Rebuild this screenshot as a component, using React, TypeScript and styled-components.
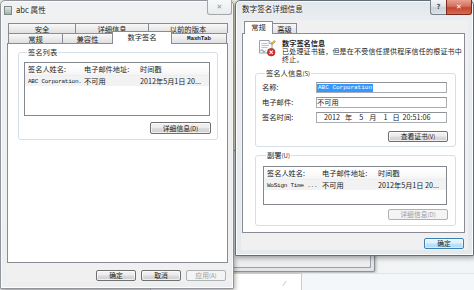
import React from 'react';
import styled, { createGlobalStyle, css } from 'styled-components';

const CJK = `"Noto Sans CJK SC", "Noto Sans", sans-serif`;
const MONO = `"Liberation Mono", "DejaVu Sans Mono", monospace`;

const GlobalStyle = createGlobalStyle`
  html, body { margin: 0; padding: 0; }
  body { width: 474px; height: 290px; overflow: hidden; font-family: ${CJK}; font-size: 7.2px; color: #1c1c1c; }
  * { box-sizing: border-box; }
`;

const Desktop = styled.div`
  position: relative;
  width: 474px;
  height: 290px;
  overflow: hidden;
  background: linear-gradient(90deg, #e9e9e6 0%, #efeee8 46%, #f4efd6 49%, #f1f1ee 52%, #f2f5f8 100%);
`;

const Win = styled.div<{ $x: number; $y: number; $w: number; $h: number; $active?: boolean }>`
  position: absolute;
  left: ${p => p.$x}px;
  top: ${p => p.$y}px;
  width: ${p => p.$w}px;
  height: ${p => p.$h}px;
  display: flex;
  flex-direction: column;
  border: 1px solid ${p => (p.$active ? '#646c74' : '#8f959b')};
  border-radius: 5px 5px 1px 1px;
  background: ${p =>
    p.$active
      ? 'linear-gradient(180deg, #e1e7ed 0px, #eaeef2 20px, #e4e9ee 100%)'
      : 'linear-gradient(180deg, #eff1f2 0px, #eceeef 100%)'};
  box-shadow: inset 0 0 0 1px rgba(255, 255, 255, 0.8), 1px 2px 5px rgba(0, 0, 0, 0.35);
  z-index: ${p => (p.$active ? 3 : 2)};
`;

const TitleBar = styled.div<{ $h: number; $padL: number }>`
  height: ${p => p.$h}px;
  flex: none;
  display: flex;
  align-items: flex-start;
  padding-left: ${p => p.$padL}px;
`;

const AppIcon = styled.div`
  width: 8px;
  height: 9px;
  margin-top: 5px;
  margin-right: 4px;
  border: 1px solid #7d8a86;
  background: linear-gradient(#dfe8e2, #9fb3aa);
`;

const TitleText = styled.div<{ $top: number }>`
  margin-top: ${p => p.$top}px;
  font-size: 7.6px;
  line-height: 9px;
  color: #202020;
  text-shadow: 0 0 5px #fff, 0 0 2px #fff;
`;

const CaptionGroup = styled.div<{ $r: number }>`
  margin-left: auto;
  margin-right: ${p => p.$r}px;
  margin-top: -1px;
  display: flex;
`;

const CapBtn = styled.div<{ $w: number; $kind: 'close' | 'help' | 'idle' }>`
  width: ${p => p.$w}px;
  height: 15px;
  display: flex;
  align-items: center;
  justify-content: center;
  font-family: "DejaVu Sans", sans-serif;
  font-size: 7px;
  font-weight: bold;
  border: 1px solid #7b8188;
  border-top: none;
  ${p =>
    p.$kind === 'close' &&
    css`
      border-color: #7e2a1f;
      border-radius: 0 0 3px 0;
      background: linear-gradient(180deg, #e8a090 0%, #d46f5c 45%, #c5452f 55%, #d86a50 100%);
      color: #fff;
    `}
  ${p =>
    p.$kind === 'help' &&
    css`
      border-right: none;
      border-radius: 0 0 0 3px;
      background: linear-gradient(180deg, #f3f5f7 0%, #dfe4e9 45%, #cbd2d9 55%, #dde2e7 100%);
      color: #4a5560;
    `}
  ${p =>
    p.$kind === 'idle' &&
    css`
      border-color: #a3a8ad;
      border-radius: 0 0 3px 3px;
      background: linear-gradient(180deg, #f7f8f9, #e9ebed);
      color: #8e959c;
    `}
`;

const Client = styled.div<{ $m: string }>`
  flex: 1;
  margin: ${p => p.$m};
  background: #f0f0f0;
  display: flex;
  flex-direction: column;
  padding-top: 1px;
`;

const TabRows = styled.div<{ $padL: number }>`
  display: flex;
  flex-direction: column;
  padding-left: ${p => p.$padL}px;
`;

const TabRow = styled.div<{ $h: number }>`
  display: flex;
  height: ${p => p.$h}px;
`;

const Tab = styled.div<{ $w: number; $top?: number; $sel?: boolean }>`
  width: ${p => p.$w}px;
  flex: none;
  display: flex;
  align-items: center;
  justify-content: center;
  margin-top: ${p => p.$top ?? 0}px;
  border: 1px solid #898c95;
  border-bottom: none;
  border-right-width: 0;
  background: linear-gradient(180deg, #f8f8f8 0%, #ececec 50%, #e0e0e0 100%);
  font-size: 7.3px;
  line-height: 8px;
  white-space: nowrap;
  &:last-child {
    border-right-width: 1px;
  }
  ${p =>
    p.$sel &&
    css`
      position: relative;
      z-index: 2;
      height: 13px;
      align-self: flex-start;
      border-right-width: 1px;
      margin-right: -1px;
      background: #fff;
      padding-bottom: 2px;
    `}
`;

const TabLatin = styled.span`
  font-family: ${MONO};
  font-size: 6px;
  font-weight: bold;
  letter-spacing: -0.2px;
`;

const Page = styled.div<{ $h: number; $m: string; $pad: string }>`
  height: ${p => p.$h}px;
  flex: none;
  margin: ${p => p.$m};
  padding: ${p => p.$pad};
  background: #fff;
  border: 1px solid #898c95;
  display: flex;
  flex-direction: column;
`;

const Group = styled.fieldset<{ $pad: string; $mt?: number }>`
  margin: ${p => p.$mt ?? 0}px 0 0 0;
  min-inline-size: 0;
  border: 1px solid #d5dfe5;
  border-radius: 3px;
  padding: ${p => p.$pad};
  display: flex;
  flex-direction: column;
`;

const Legend = styled.legend`
  padding: 0 1px;
  margin-left: 3px;
  font-size: 7.3px;
  line-height: 8px;
  color: #2a2a2a;
`;

const Small = styled.span`
  font-size: 6px;
`;

const List = styled.div<{ $h: number }>`
  height: ${p => p.$h}px;
  flex: none;
  border: 1px solid #828790;
  background: #fff;
  display: flex;
  flex-direction: column;
`;

const ListHeader = styled.div<{ $cols: string }>`
  display: grid;
  grid-template-columns: ${p => p.$cols};
  height: 13px;
  align-items: center;
  background: linear-gradient(180deg, #ffffff 0%, #fbfbfc 60%, #f3f4f5 100%);
  border-bottom: 1px solid #eceef0;
`;

const ListRow = styled.div<{ $cols: string }>`
  display: grid;
  grid-template-columns: ${p => p.$cols};
  height: 10px;
  align-items: center;
  background: #f2f2f2;
`;

const Cell = styled.div`
  padding-left: 3px;
  white-space: nowrap;
  overflow: hidden;
  font-size: 7.2px;
  line-height: 9px;
`;

const MonoText = styled.span`
  font-family: ${MONO};
  font-size: 6px;
  letter-spacing: -0.25px;
  color: #222;
`;

const Btn = styled.button<{ $w: number; $h?: number; $mt?: number; $default?: boolean }>`
  width: ${p => p.$w}px;
  height: ${p => p.$h ?? 11}px;
  flex: none;
  margin-top: ${p => p.$mt ?? 0}px;
  padding: 0;
  font-family: ${CJK};
  font-size: 6.8px;
  line-height: 9px;
  color: #1a1a1a;
  border: 1px solid #707070;
  border-radius: 2px;
  background: linear-gradient(180deg, #f3f3f3 0%, #ebebeb 48%, #dcdcdc 52%, #cfcfcf 100%);
  box-shadow: inset 0 0 0 1px rgba(255, 255, 255, 0.65);
  &:disabled {
    color: #9c9c9c;
    border-color: #adb2b5;
    background: #f4f4f4;
    box-shadow: none;
  }
  ${p =>
    p.$default &&
    css`
      border-color: #3c7fb1;
      background: linear-gradient(180deg, #eaf6fd 0%, #d9f0fc 48%, #bee6fd 52%, #a7d9f5 100%);
      box-shadow: inset 0 0 0 1px rgba(255, 255, 255, 0.5);
    `}
`;

const RightAlign = styled.div<{ $mr?: number }>`
  display: flex;
  justify-content: flex-end;
  margin-right: ${p => p.$mr ?? 0}px;
`;

const ButtonBar = styled.div<{ $pad: string; $gap: number }>`
  flex: 1;
  display: flex;
  justify-content: flex-end;
  align-items: flex-start;
  gap: ${p => p.$gap}px;
  padding: ${p => p.$pad};
`;

/* right window parts */
const InfoHead = styled.div`
  display: flex;
  gap: 5px;
  padding-left: 3px;
  height: 24px;
  flex: none;
`;

const InfoIcon = styled.svg`
  flex: none;
`;

const InfoTexts = styled.div`
  display: flex;
  flex-direction: column;
`;

const InfoTitle = styled.div`
  font-weight: bold;
  font-size: 7.2px;
  height: 8px;
  line-height: 8px;
`;

const InfoDesc = styled.div`
  font-size: 7px;
  height: 8px;
  line-height: 8px;
  letter-spacing: 0.2px;
  white-space: nowrap;
`;

const FieldRows = styled.div`
  display: flex;
  flex-direction: column;
  gap: 4px;
`;

const FieldRow = styled.div`
  display: flex;
  align-items: center;
  height: 11px;
`;

const FieldLabel = styled.div`
  width: 54px;
  flex: none;
  font-size: 7.3px;
  line-height: 9px;
`;

const TextBox = styled.div<{ $padL?: number }>`
  flex: 1;
  height: 11px;
  border: 1px solid #abadb3;
  border-top-color: #8e929a;
  background: #fff;
  display: flex;
  align-items: center;
  padding-left: ${p => p.$padL ?? 0}px;
  font-size: 7.2px;
  line-height: 9px;
  white-space: pre;
`;

const Highlight = styled.span`
  background: #3399ff;
  color: #fff;
  font-family: ${MONO};
  font-size: 6px;
  line-height: 8px;
  padding: 0 1px;
`;

const DatePart = styled.span<{ $ml: number }>`
  margin-left: ${p => p.$ml}px;
`;

/* background stuff */
const BgWindow = styled.div`
  position: absolute;
  left: 150px;
  top: 150px;
  width: 225px;
  height: 122px;
  background: #eceef0;
  border: 1px solid #8c9196;
  border-radius: 2px;
  box-shadow: 1px 1px 3px rgba(0, 0, 0, 0.3), inset -3px -3px 0 #e2e5e8, inset -4px -4px 0 #9aa0a6;
  z-index: 1;
`;

const BgField = styled.div`
  position: absolute;
  left: 150px;
  top: 273px;
  width: 152px;
  height: 30px;
  background: #fff;
  border: 1px solid #c9ced3;
  display: flex;
  justify-content: flex-end;
  padding: 4px 16px 0 0;
  color: #9aa0a6;
  font-size: 7px;
  z-index: 1;
`;

const BgPane = styled.div`
  position: absolute;
  left: 302px;
  top: 273px;
  width: 172px;
  height: 20px;
  background: #f3f7fa;
  border-top: 1px solid #dfe5ea;
  z-index: 1;
`;

const leftCols = '56px 56px 1fr';
const rightCols = '55px 56px 1fr';

const CertIcon = () => (
  <InfoIcon width="19" height="18" viewBox="0 0 19 18">
    <path d="M1.5 1.5h9.5l3 3v9.5h-12.5z" fill="#fbfcfd" stroke="#7f8c99" strokeWidth="0.8" />
    <path d="M11 1.5v3h3" fill="#dfe5ea" stroke="#7f8c99" strokeWidth="0.6" />
    <path d="M3.5 4.5h6M3.5 6.5h7.5M3.5 8.5h6" stroke="#a7b3bf" strokeWidth="0.8" />
    <path d="M2.5 12.2c1.2-2 2.2-2 2.6 0s1.6 0.3 2.4-0.6" fill="none" stroke="#3b4a5a" strokeWidth="0.7" />
    <path d="M13 4.5l3.5-3 1 1-3.5 3.2z" fill="#e6b944" stroke="#9c7414" strokeWidth="0.5" />
    <circle cx="13.2" cy="13.2" r="3.8" fill="#d5342b" stroke="#8a1a12" strokeWidth="0.6" />
    <path d="M11.6 11.6l3.2 3.2M14.8 11.6l-3.2 3.2" stroke="#fff" strokeWidth="1.1" />
  </InfoIcon>
);

export default function App() {
  return (
    <>
      <GlobalStyle />
      <Desktop>
        <BgWindow />
        <BgField>⁄</BgField>
        <BgPane />

        {/* Properties window */}
        <Win $x={0} $y={0} $w={234} $h={289}>
          <TitleBar $h={21} $padL={3}>
            <AppIcon />
            <TitleText $top={4}>abc 属性</TitleText>
            <CaptionGroup $r={1}>
              <CapBtn $w={25} $kind="idle">✕</CapBtn>
            </CaptionGroup>
          </TitleBar>
          <Client $m="0 3px 6px 5px">
            <TabRows $padL={2}>
              <TabRow $h={10}>
                <Tab $w={67}>安全</Tab>
                <Tab $w={73}>详细信息</Tab>
                <Tab $w={80}>以前的版本</Tab>
              </TabRow>
              <TabRow $h={10}>
                <Tab $w={54}>常规</Tab>
                <Tab $w={50}>兼容性</Tab>
                <Tab $w={60} $top={-2} $sel>数字签名</Tab>
                <Tab $w={56}><TabLatin>MaxhTab</TabLatin></Tab>
              </TabRow>
            </TabRows>
            <Page $h={220} $m="0 2px 0 1px" $pad="4px 9px 0 10px">
              <Group $pad="6px 7px 5px 5px">
                <Legend>签名列表</Legend>
                <List $h={54}>
                  <ListHeader $cols={leftCols}>
                    <Cell>签名人姓名:</Cell>
                    <Cell>电子邮件地址:</Cell>
                    <Cell>时间戳</Cell>
                  </ListHeader>
                  <ListRow $cols={leftCols}>
                    <Cell><MonoText>ABC Corporation.</MonoText></Cell>
                    <Cell>不可用</Cell>
                    <Cell>2012年5月1日 20...</Cell>
                  </ListRow>
                </List>
                <RightAlign $mr={-1}>
                  <Btn $w={61} $h={12} $mt={6}>详细信息<Small>(D)</Small></Btn>
                </RightAlign>
              </Group>
            </Page>
            <ButtonBar $pad="7px 4px 0 0" $gap={5}>
              <Btn $w={40}>确定</Btn>
              <Btn $w={40}>取消</Btn>
              <Btn $w={40} disabled>应用<Small>(A)</Small></Btn>
            </ButtonBar>
          </Client>
        </Win>

        {/* Signature details window */}
        <Win $x={235} $y={0} $w={239} $h={256} $active>
          <TitleBar $h={19} $padL={6}>
            <TitleText $top={3}>数字签名详细信息</TitleText>
            <CaptionGroup $r={1}>
              <CapBtn $w={16} $kind="help">?</CapBtn>
              <CapBtn $w={26} $kind="close">✕</CapBtn>
            </CaptionGroup>
          </TitleBar>
          <Client $m="0 5px 5px 5px">
            <TabRows $padL={3}>
              <TabRow $h={12}>
                <Tab $w={29} $sel>常规</Tab>
                <Tab $w={25} $top={2}>高级</Tab>
              </TabRow>
            </TabRows>
            <Page $h={200} $m="0 3px 0 1px" $pad="5px 8px 0 12px">
              <InfoHead>
                <CertIcon />
                <InfoTexts>
                  <InfoTitle>数字签名信息</InfoTitle>
                  <InfoDesc>已处理证书链，但是在不受信任提供程序信任的根证书中</InfoDesc>
                  <InfoDesc>终止。</InfoDesc>
                </InfoTexts>
              </InfoHead>
              <Group $pad="4px 8px 4px 6px" $mt={6}>
                <Legend>签名人信息<Small>(S)</Small></Legend>
                <FieldRows>
                  <FieldRow>
                    <FieldLabel>名称:</FieldLabel>
                    <TextBox><Highlight>ABC Corporation</Highlight></TextBox>
                  </FieldRow>
                  <FieldRow>
                    <FieldLabel>电子邮件:</FieldLabel>
                    <TextBox>不可用</TextBox>
                  </FieldRow>
                  <FieldRow>
                    <FieldLabel>签名时间:</FieldLabel>
                    <TextBox $padL={7}>
                      <DatePart $ml={0}>2012</DatePart>
                      <DatePart $ml={5}>年</DatePart>
                      <DatePart $ml={7}>5</DatePart>
                      <DatePart $ml={6}>月</DatePart>
                      <DatePart $ml={7}>1</DatePart>
                      <DatePart $ml={5}>日</DatePart>
                      <DatePart $ml={3}>20:51:06</DatePart>
                    </TextBox>
                  </FieldRow>
                </FieldRows>
                <RightAlign $mr={-1}>
                  <Btn $w={60} $mt={8}>查看证书<Small>(V)</Small></Btn>
                </RightAlign>
              </Group>
              <Group $pad="6px 8px 5px 7px" $mt={4}>
                <Legend>副署<Small>(U)</Small></Legend>
                <List $h={39}>
                  <ListHeader $cols={rightCols}>
                    <Cell>签名人姓名:</Cell>
                    <Cell>电子邮件地址:</Cell>
                    <Cell>时间戳</Cell>
                  </ListHeader>
                  <ListRow $cols={rightCols}>
                    <Cell><MonoText>WoSign Time ...</MonoText></Cell>
                    <Cell>不可用</Cell>
                    <Cell>2012年5月1日 20...</Cell>
                  </ListRow>
                </List>
                <RightAlign $mr={-1}>
                  <Btn $w={60} $mt={4} disabled>详细信息<Small>(D)</Small></Btn>
                </RightAlign>
              </Group>
            </Page>
            <ButtonBar $pad="5px 4px 0 0" $gap={5}>
              <Btn $w={40} $default>确定</Btn>
            </ButtonBar>
          </Client>
        </Win>
      </Desktop>
    </>
  );
}
